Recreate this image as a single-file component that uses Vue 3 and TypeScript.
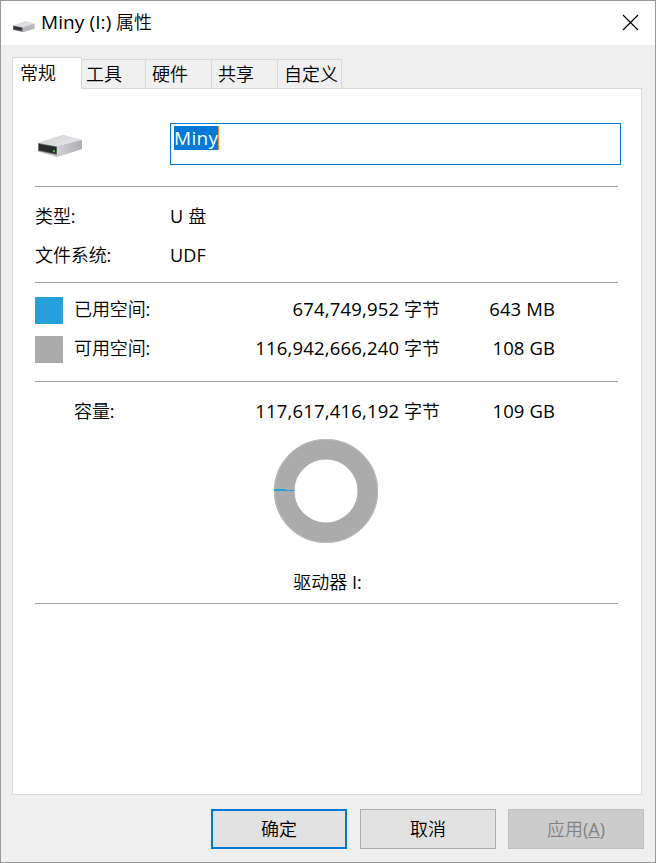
<script setup lang="ts">
import { ref } from 'vue'

interface Tab { id: string; label: string; width: number }
interface SpaceRow { kind: string; label: string; bytes: string; size: string }

const tabs: Tab[] = [
  { id: 'general', label: '常规', width: 70 },
  { id: 'tools', label: '工具', width: 64 },
  { id: 'hardware', label: '硬件', width: 66 },
  { id: 'sharing', label: '共享', width: 66 },
  { id: 'custom', label: '自定义', width: 64 },
]
const activeTab = ref('general')

const facts = [
  { label: '类型:', value: 'U 盘' },
  { label: '文件系统:', value: 'UDF' },
]
const usage: SpaceRow[] = [
  { kind: 'used', label: '已用空间:', bytes: '674,749,952', size: '643 MB' },
  { kind: 'free', label: '可用空间:', bytes: '116,942,666,240', size: '108 GB' },
]
</script>

<template>
  <div class="dialog">
    <header class="titlebar">
      <svg class="title-icon" viewBox="0 0 46 24">
        <path d="M0 9 26 0 45 5 45 16 20 23 0 18Z" fill="#d0d0d2" />
        <path d="M0 9 26 0 45 5 20 13Z" fill="#dedfe1" />
        <path d="M20 13 45 5V15L20 23Z" fill="#b9b9bc" />
        <path d="M0 9 20 13V22L0 18Z" fill="#5c5d5f" />
        <path d="M2 11 18 14V19L2 16Z" fill="#2e3131" />
      </svg>
      <h1><span class="volume">Miny (I:)</span> 属性</h1>
      <svg class="close" viewBox="0 0 17 17"><path d="M1 1 16 16M16 1 1 16" /></svg>
    </header>

    <nav class="tabs">
      <div
        v-for="tab in tabs" :key="tab.id" class="tab"
        :class="{ active: tab.id === activeTab }" :style="{ width: tab.width + 'px' }"
        @click="activeTab = tab.id"
      >{{ tab.label }}</div>
    </nav>

    <main class="panel">
      <section class="identity">
        <svg class="drive" viewBox="0 0 46 24" preserveAspectRatio="none">
          <defs>
            <linearGradient id="top" x1="0" y1="0" x2="1" y2="1">
              <stop offset="0" stop-color="#d2d3d5" /><stop offset="1" stop-color="#e7e8ea" />
            </linearGradient>
            <linearGradient id="side" x1="0" y1="0" x2="1" y2="0">
              <stop offset="0" stop-color="#d2d1d5" /><stop offset="1" stop-color="#adabaf" />
            </linearGradient>
          </defs>
          <path d="M1 9 26 1 45 6V15L20 23 1 17.5Z" fill="#c6c6c9" />
          <path d="M1 9 26 1 45 6 20 12.5Z" fill="url(#top)" />
          <path d="M20 12.5 45 6V15L20 22.5Z" fill="url(#side)" />
          <path d="M1 9 20 12.5V21L1 17Z" fill="#77787a" />
          <path d="M2 10 19.3 13V20L2 16.3Z" fill="#292b2b" />
          <path d="M16 16 18 16.4V18.4L16 18Z" fill="#22dc36" />
        </svg>
        <div class="name-field"><span class="selection">Miny</span></div>
      </section>

      <dl class="facts">
        <template v-for="fact in facts" :key="fact.label">
          <dt>{{ fact.label }}</dt><dd>{{ fact.value }}</dd>
        </template>
      </dl>

      <section class="usage">
        <div v-for="row in usage" :key="row.kind" class="space-row">
          <i class="swatch" :class="row.kind"></i>
          <span class="label">{{ row.label }}</span>
          <span class="bytes"><b>{{ row.bytes }}</b> 字节</span>
          <span class="size">{{ row.size }}</span>
        </div>
      </section>

      <section class="capacity">
        <div class="space-row">
          <i></i>
          <span class="label">容量:</span>
          <span class="bytes"><b>117,617,416,192</b> 字节</span>
          <span class="size">109 GB</span>
        </div>
        <svg class="ring" viewBox="0 0 106 106">
          <circle cx="53" cy="53" r="41.8" fill="none" stroke="#ababab" stroke-width="20.6" />
          <circle cx="53" cy="53" r="51.6" fill="none" stroke="#bcbcbc" stroke-width="1" />
          <path d="M1 51H13V52H21.5V53H1Z" fill="#26a0da" />
        </svg>
        <p>驱动器 I:</p>
      </section>
    </main>

    <footer class="actions">
      <button class="primary">确定</button>
      <button>取消</button>
      <button disabled>应用(<u>A</u>)</button>
    </footer>
  </div>
</template>

<style>
body { margin: 0; }
</style>

<style scoped>
.dialog {
  box-sizing: border-box;
  width: 656px;
  height: 863px;
  border: 1px solid #999;
  background: #efefef;
  color: #000;
  font: 18px/24px "Open Sans", "Noto Sans CJK SC DemiLight", "Noto Sans CJK SC Light", "Noto Sans CJK SC", sans-serif;
  display: flex;
  flex-direction: column;
  overflow: hidden;
  white-space: nowrap;
}
.titlebar {
  box-sizing: border-box;
  height: 44px;
  padding: 0 16px 0 12px;
  background: #fff;
  display: flex;
  align-items: center;
}
.title-icon { width: 22px; height: 12px; margin: 7px 6px 0 0; }
h1 { flex: 1; margin: -3px 0 0; font-size: 18px; font-weight: 400; }
.volume { font-size: 19px; letter-spacing: .1px; }
.close { width: 17px; height: 17px; margin-top: -1px; }
.close path { fill: none; stroke: #000; stroke-width: 1.15; }
.tabs {
  display: flex;
  align-items: flex-end;
  height: 32px;
  padding: 12px 0 0 11px;
  margin-bottom: -1px;
  z-index: 1;
}
.tab {
  box-sizing: border-box;
  height: 30px;
  padding: 2px 0 0 6px;
  border: 1px solid #d9d9d9;
  border-left: 0;
  background: #f0f0f0;
}
.tab:nth-child(2) { padding-left: 4px; }
.tab.active {
  height: 32px;
  padding: 3px 0 0 7px;
  border-left: 1px solid #d9d9d9;
  border-bottom: 0;
  background: #fff;
}
.panel {
  box-sizing: border-box;
  width: 630px;
  height: 707px;
  margin-left: 11px;
  padding: 34px 20px 0 22px;
  border: 1px solid #d9d9d9;
  background: #fff;
}
.identity {
  display: flex;
  height: 63px;
  margin-right: 3px;
  border-bottom: 1px solid #a0a0a0;
}
.drive { flex: none; width: 46px; height: 24px; margin: 11px 87px 0 2px; }
.name-field {
  box-sizing: border-box;
  flex: none;
  width: 451px;
  height: 42px;
  padding: 2px 3px;
  border: 1px solid #0078d7;
}
.selection {
  display: inline-block;
  height: 24px;
  border-right: 1px solid #ff8728;
  background: #0078d7;
  color: #fff;
  font-size: 19px;
  letter-spacing: .3px;
}
.facts {
  box-sizing: border-box;
  display: grid;
  grid-template-columns: 135px 1fr;
  grid-auto-rows: 39px;
  height: 96px;
  margin: 0 3px 0 0;
  padding-top: 17px;
  border-bottom: 1px solid #a0a0a0;
}
dt, .label { letter-spacing: -.1px; }
dd { margin: 0; letter-spacing: .2px; }
.usage {
  box-sizing: border-box;
  height: 99px;
  margin-right: 3px;
  padding-top: 14px;
  border-bottom: 1px solid #a0a0a0;
}
.space-row {
  display: grid;
  grid-template-columns: 39px 120px 246px 115px;
  height: 39px;
}
.swatch { width: 28px; height: 27px; }
.used { background: #26a0da; }
.free { background: #ababab; }
.bytes, .size { text-align: right; }
b { font-weight: 400; font-size: 18.5px; letter-spacing: .18px; }
.size { font-size: 18.5px; letter-spacing: .1px; }
.capacity {
  box-sizing: border-box;
  height: 222px;
  margin-right: 3px;
  padding-top: 17px;
  border-bottom: 1px solid #a0a0a0;
}
.ring { display: block; width: 106px; height: 106px; margin: -.3px 0 0 237.5px; }
.capacity p { margin: 26.3px 0 0; padding-left: 2px; text-align: center; }
.actions {
  display: flex;
  gap: 12px;
  justify-content: flex-end;
  padding: 14px 11px 0 0;
}
button {
  box-sizing: border-box;
  width: 136px;
  height: 40px;
  padding: 0;
  border: 1px solid #adadad;
  background: #e1e1e1;
  color: #000;
  font: inherit;
}
.primary { margin-right: 1px; border: 2px solid #0078d7; }
button:disabled { border-color: #bfbfbf; background: #ccc; color: #838383; }
</style>
